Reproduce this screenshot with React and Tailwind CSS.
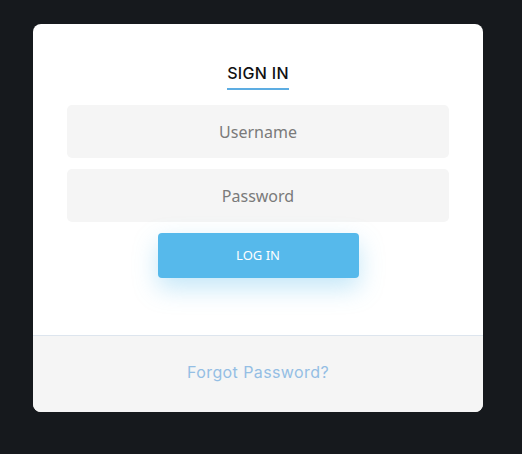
export default function App() {
  return (
    <div className="w-[522px] h-[454px] bg-[#16191d] pt-[24px] pl-[33px]">
      <div className="w-[450px] h-[388px] bg-white rounded-[8px] overflow-hidden flex flex-col">
        <div className="flex-1 flex flex-col items-center pt-[37px]">
          <div className="inline-block border-b-2 border-[#5dade2] pb-[3px] text-[16px] leading-[24px] text-[#111] tracking-[0.3px] font-medium font-['Inter',sans-serif]">
            SIGN IN
          </div>
          <div className="mt-[15px] w-[382px] flex flex-col gap-[11px]">
            <div className="h-[53px] bg-[#f5f5f5] rounded-[5px] flex items-center justify-center text-[16px] text-[#7a7a7a] font-['Noto_Sans',sans-serif]">
              Username
            </div>
            <div className="h-[53px] bg-[#f5f5f5] rounded-[5px] flex items-center justify-center text-[16px] text-[#7a7a7a] font-['Noto_Sans',sans-serif]">
              Password
            </div>
          </div>
          <div className="mt-[11px] w-[201px] h-[45px] bg-[#56b9eb] rounded-[4px] flex items-center justify-center text-white text-[13px] shadow-[0_10px_25px_rgba(86,185,235,0.35)] font-['Noto_Sans',sans-serif]">
            LOG IN
          </div>
        </div>
        <div className="h-[77px] pb-[4px] border-t border-[#dde5ee] bg-[#f5f5f5] flex items-center justify-center text-[16px] tracking-[0.4px] text-[#94bee4] font-['Inter',sans-serif]">
          Forgot Password?
        </div>
      </div>
    </div>
  );
}
